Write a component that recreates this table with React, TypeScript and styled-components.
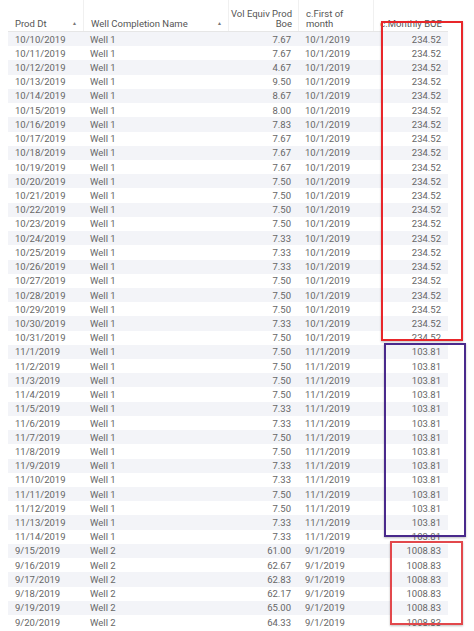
import React from 'react';
import styled, { createGlobalStyle } from 'styled-components';

type Row = { dt: string; well: string; vol: string; first: string; boe: string };

const GlobalStyle = createGlobalStyle`
  html, body {
    margin: 0;
    padding: 0;
    background: #fff;
    overflow: hidden;
  }
`;

const oct = ['7.67', '7.67', '4.67', '9.50', '8.67', '8.00', '7.83', '7.67', '7.67', '7.67', '7.50', '7.50', '7.50', '7.50', '7.33', '7.33', '7.33', '7.50', '7.50', '7.50', '7.33', '7.50'];
const nov = ['7.50', '7.50', '7.50', '7.50', '7.33', '7.33', '7.50', '7.50', '7.33', '7.33', '7.50', '7.50', '7.33', '7.33'];
const sep = ['61.00', '62.67', '62.83', '62.17', '65.00', '64.33'];

const rows: Row[] = [
  ...oct.map((vol, i) => ({ dt: `10/${10 + i}/2019`, well: 'Well 1', vol, first: '10/1/2019', boe: '234.52' })),
  ...nov.map((vol, i) => ({ dt: `11/${1 + i}/2019`, well: 'Well 1', vol, first: '11/1/2019', boe: '103.81' })),
  ...sep.map((vol, i) => ({ dt: `9/${15 + i}/2019`, well: 'Well 2', vol, first: '9/1/2019', boe: '1008.83' })),
];

const COLS = '75px 145px 70px 75px 75px';

const Page = styled.div`
  position: relative;
  width: 474px;
  height: 631px;
  font-family: Roboto, 'Liberation Sans', sans-serif;
`;

const Table = styled.div`
  margin-left: 8px;
  width: 440px;
`;

const HeaderRow = styled.div`
  display: grid;
  grid-template-columns: ${COLS};
  height: 32px;
  border-bottom: 1px solid #e6e6e6;
  box-sizing: border-box;
`;

const HeaderCell = styled.div<{ $right?: boolean; $divider?: boolean }>`
  display: flex;
  align-items: flex-end;
  justify-content: ${(p) => (p.$right ? 'flex-end' : 'space-between')};
  padding: 0 6px 2px 7px;
  border-left: ${(p) => (p.$divider ? '1px solid #f0f0f0' : 'none')};
  font-size: 9.5px;
  line-height: 10px;
  color: #555;
  white-space: nowrap;
  min-width: 0;
  text-align: ${(p) => (p.$right ? 'right' : 'left')};
`;

const SortArrow = styled.span`
  font-size: 5px;
  color: #777;
  margin-bottom: 1px;
`;

const DataRow = styled.div<{ $striped: boolean }>`
  display: grid;
  grid-template-columns: ${COLS};
  height: 14.22px;
  align-items: center;
  background: ${(p) => (p.$striped ? '#f3f4f8' : '#fff')};
  font-size: 9.5px;
  color: #666;
`;

const Cell = styled.div<{ $right?: boolean }>`
  padding: 0 ${(p) => (p.$right ? '7px' : '6px')} 0 7px;
  text-align: ${(p) => (p.$right ? 'right' : 'left')};
  white-space: nowrap;
`;

const Highlight = styled.div<{ $color: string }>`
  position: absolute;
  border: 2px solid ${(p) => p.$color};
  box-shadow: 0 1px 2px rgba(0, 0, 0, 0.25);
  box-sizing: border-box;
  pointer-events: none;
`;

export default function App() {
  return (
    <Page>
      <GlobalStyle />
      <Table>
        <HeaderRow>
          <HeaderCell>
            Prod Dt <SortArrow>▲</SortArrow>
          </HeaderCell>
          <HeaderCell $divider>
            Well Completion Name <SortArrow>▲</SortArrow>
          </HeaderCell>
          <HeaderCell $right $divider>
            <span>
              Vol Equiv Prod
              <br />
              Boe
            </span>
          </HeaderCell>
          <HeaderCell $divider>
            <span>
              c.First of
              <br />
              month
            </span>
          </HeaderCell>
          <HeaderCell $right $divider>
            <span>c.Monthly BOE</span>
          </HeaderCell>
        </HeaderRow>
        {rows.map((r, i) => (
          <DataRow key={i} $striped={i % 2 === 0}>
            <Cell>{r.dt}</Cell>
            <Cell>{r.well}</Cell>
            <Cell $right>{r.vol}</Cell>
            <Cell>{r.first}</Cell>
            <Cell $right>{r.boe}</Cell>
          </DataRow>
        ))}
      </Table>
      <Highlight $color="#e8262a" style={{ left: 381, top: 21, width: 82, height: 320 }} />
      <Highlight $color="#4a2a8c" style={{ left: 384, top: 343, width: 82, height: 194 }} />
      <Highlight $color="#e2484c" style={{ left: 390, top: 541, width: 73, height: 84 }} />
    </Page>
  );
}
